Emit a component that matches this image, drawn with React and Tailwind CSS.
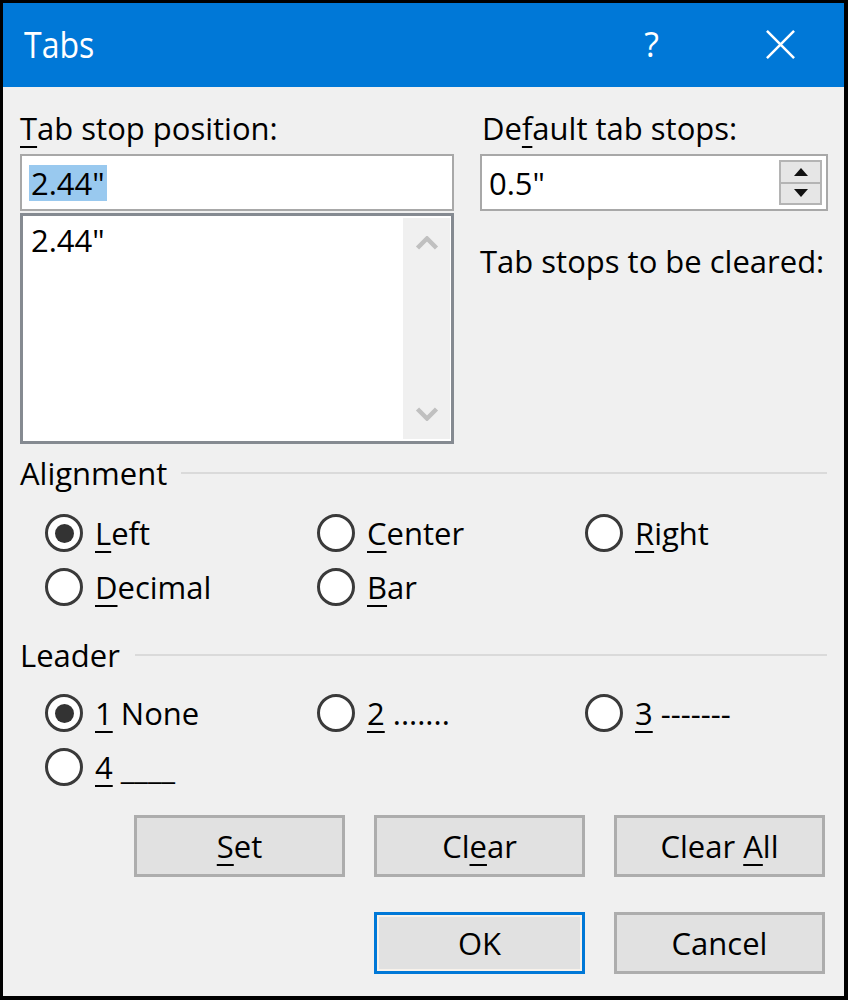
import React from "react";

const U = ({ children }) => (
  <span className="underline decoration-[2px] underline-offset-[6px]">{children}</span>
);

function Radio({ checked, children }) {
  return (
    <div className="flex items-center gap-[12px] h-[42px]">
      <span className="w-[38px] h-[38px] rounded-full border-[3px] border-[#3a3a3a] bg-white flex items-center justify-center shrink-0">
        {checked ? <span className="w-[19px] h-[19px] rounded-full bg-[#333333]" /> : null}
      </span>
      <span className="leading-[42px] whitespace-pre">{children}</span>
    </div>
  );
}

function Btn({ children, primary }) {
  return (
    <div
      className={
        primary
          ? "w-[211px] h-[62px] flex items-center justify-center bg-[#e1e1e1] border-[3px] border-[#0078d7] shadow-[inset_0_0_0_2px_#f7f1ea]"
          : "w-[211px] h-[62px] flex items-center justify-center bg-[#e1e1e1] border-[3px] border-[#adadad]"
      }
    >
      <span className="leading-[42px]">{children}</span>
    </div>
  );
}

function Group({ title, children, gap }) {
  return (
    <div className="flex items-center h-[42px]">
      <span className="leading-[42px]">{title}</span>
      <div className={gap} />
      <div className="flex-1 h-[2px] bg-[#dadada] mr-[1px]" />
    </div>
  );
}

export default function App() {
  return (
    <div className="w-[848px] h-[1000px] border-l-[3px] border-t-[3px] border-r-[4px] border-b-[4px] border-black bg-[#f0f0f0] flex flex-col font-['Open_Sans',sans-serif] font-medium text-[31px] text-black overflow-hidden">
      {/* Title bar */}
      <div className="h-[84px] bg-[#0078d7] flex items-center pl-[21px] pr-[48px] shrink-0">
        <span className="text-white font-normal text-[32px] leading-[42px] scale-y-[1.15] mt-[-2px]">Tabs</span>
        <div className="flex-1" />
        <span className="text-white font-normal text-[34px] leading-[42px] mr-[106px] mt-[-2px]">?</span>
        <svg width="31" height="31" viewBox="0 0 32 32" className="mt-[-1px]">
          <path d="M2 2 L30 30 M30 2 L2 30" stroke="white" strokeWidth="2.6" fill="none" />
        </svg>
      </div>

      {/* Body */}
      <div className="flex-1 pl-[17px] pr-[16px] pt-[20px] flex flex-col">
        <div className="grid grid-cols-[434px_348px] gap-x-[26px]">
          {/* Left column */}
          <div className="flex flex-col">
            <div className="leading-[42px]">
              <U>T</U>ab stop position:
            </div>
            <div className="mt-[5px] h-[57px] border-2 border-[#a8a8a8] bg-white flex items-center pl-[7px]">
              <span className="bg-[#99c9ef] leading-[36px] px-[2px]">2.44"</span>
            </div>
            <div className="mt-[2px] h-[231px] border-[3px] border-[#858a91] bg-white flex">
              <div className="flex-1 pl-[8px] pt-[1px]">
                <span className="leading-[42px]">2.44"</span>
              </div>
              <div className="w-[47px] my-[2px] mr-[1px] bg-[#f0f0f0] flex flex-col items-center justify-between py-[18px]">
                <svg width="24" height="14" viewBox="0 0 24 14">
                  <path d="M2.5 12 L12 2.5 L21.5 12" stroke="#c0c0c0" strokeWidth="4.5" fill="none" />
                </svg>
                <svg width="24" height="14" viewBox="0 0 24 14">
                  <path d="M2.5 2 L12 11.5 L21.5 2" stroke="#c0c0c0" strokeWidth="4.5" fill="none" />
                </svg>
              </div>
            </div>
          </div>

          {/* Right column */}
          <div className="flex flex-col">
            <div className="leading-[42px] pl-[2px]">
              De<U>f</U>ault tab stops:
            </div>
            <div className="mt-[5px] h-[57px] border-2 border-[#a8a8a8] bg-white flex items-center pl-[7px] pr-[4px]">
              <span className="flex-1 leading-[42px]">0.5"</span>
              <div className="w-[43px] h-[45px] flex flex-col">
                <div className="flex-1 border-2 border-[#b4b4b4] bg-[#e6e6e6] flex items-center justify-center">
                  <svg width="14" height="8" viewBox="0 0 14 8">
                    <path d="M0 8 L7 0 L14 8 Z" fill="#111" />
                  </svg>
                </div>
                <div className="flex-1 border-2 border-t-0 border-[#b4b4b4] bg-[#e6e6e6] flex items-center justify-center">
                  <svg width="14" height="8" viewBox="0 0 14 8">
                    <path d="M0 0 L7 8 L14 0 Z" fill="#111" />
                  </svg>
                </div>
              </div>
            </div>
            <div className="mt-[29px] leading-[42px]">Tab stops to be cleared:</div>
          </div>
        </div>

        {/* Alignment */}
        <div className="mt-[8px]">
          <Group title="Alignment" gap="w-[14px]" />
        </div>
        <div className="mt-[18px] pl-[25px] grid grid-cols-[272px_268px_1fr] gap-y-[12px]">
          <Radio checked>
            <U>L</U>eft
          </Radio>
          <Radio>
            <U>C</U>enter
          </Radio>
          <Radio>
            <U>R</U>ight
          </Radio>
          <Radio>
            <U>D</U>ecimal
          </Radio>
          <Radio>
            <U>B</U>ar
          </Radio>
        </div>

        {/* Leader */}
        <div className="mt-[26px]">
          <Group title="Leader" gap="w-[15px]" />
        </div>
        <div className="mt-[16px] pl-[25px] grid grid-cols-[272px_268px_1fr] gap-y-[12px]">
          <Radio checked>
            <U>1</U> None
          </Radio>
          <Radio>
            <U>2</U> .......
          </Radio>
          <Radio>
            <U>3</U> -------
          </Radio>
          <Radio>
            <U>4</U> ____
          </Radio>
        </div>

        {/* Buttons */}
        <div className="mt-[27px] flex justify-end gap-[29px] pr-[3px]">
          <Btn>
            <U>S</U>et
          </Btn>
          <Btn>
            Cl<U>e</U>ar
          </Btn>
          <Btn>
            Clear <U>A</U>ll
          </Btn>
        </div>
        <div className="mt-[35px] flex justify-end gap-[29px] pr-[3px]">
          <Btn primary>OK</Btn>
          <Btn>Cancel</Btn>
        </div>
      </div>
    </div>
  );
}
